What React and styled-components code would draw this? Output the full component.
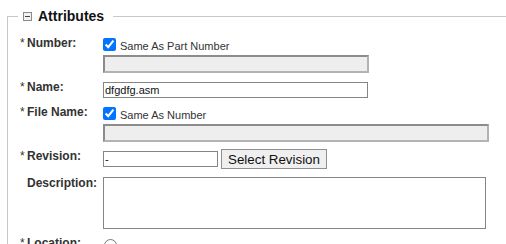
import React from "react";
import styled, { createGlobalStyle } from "styled-components";

const Global = createGlobalStyle`
  html, body { margin: 0; padding: 0; background: #fff; overflow: hidden; }
  body { font-family: "Liberation Sans", Arial, sans-serif; color: #333; }
`;

const Fieldset = styled.fieldset`
  margin: 8px 0 0 7px;
  padding: 12px 0 20px 0;
  width: 580px;
  min-width: 0;
  border: 1px solid #c8c8c8;
`;

const Legend = styled.legend`
  margin-left: 10px;
  padding: 0 9px 0 5px;
  display: flex;
  align-items: center;
  gap: 6px;
  font-size: 14px;
  font-weight: bold;
  line-height: 16px;
  color: #111;
`;

const Collapse = styled.span`
  position: relative;
  display: inline-block;
  box-sizing: border-box;
  width: 9px;
  height: 9px;
  border: 1px solid #8a8a8a;
  background: #f2f2f2;
  margin-top: 1px;
  &::after {
    content: "";
    position: absolute;
    left: 1px;
    right: 1px;
    top: 3px;
    height: 1px;
    background: #444;
  }
`;

const Form = styled.div`
  display: flex;
  flex-direction: column;
  gap: 7px;
`;

const Row = styled.div`
  display: grid;
  grid-template-columns: 95px 1fr;
  align-items: start;
`;

const Label = styled.div`
  padding-left: 12px;
  font-size: 12px;
  font-weight: bold;
  line-height: 14px;
  color: #333;
  white-space: nowrap;
`;

const Req = styled.span`
  display: inline-block;
  width: 7px;
  font-weight: normal;
`;

const Field = styled.div`
  display: flex;
  flex-direction: ${(p) => (p.$inline ? "row" : "column")};
  align-items: flex-start;
  gap: ${(p) => (p.$inline ? "3px" : "0")};
`;

const CheckLine = styled.label`
  display: flex;
  align-items: flex-start;
  margin-top: 2px;
`;

const Check = styled.input`
  margin: 0;
  width: 13px;
  height: 13px;
  accent-color: #0075ff;
`;

const CheckText = styled.span`
  margin: 2px 0 0 4px;
  font-size: 11px;
  line-height: 13px;
  color: #333;
`;

const DisabledBox = styled.input`
  box-sizing: border-box;
  margin-top: 2px;
  width: ${(p) => p.$w}px;
  height: ${(p) => p.$h}px;
  background: #eeeeee;
  border-style: solid;
  border-width: 2px;
  border-color: #8c8c8c #b3b3b3 #b3b3b3 #8c8c8c;
  padding: 0;
`;

const TextBox = styled.input`
  box-sizing: border-box;
  margin-top: 2px;
  width: ${(p) => p.$w}px;
  height: 16px;
  border: 1px solid #858585;
  padding: 0 1px;
  font-family: "Liberation Sans", Arial, sans-serif;
  font-size: 11px;
  color: #111;
  outline: none;
`;

const Button = styled.button`
  box-sizing: border-box;
  height: 20px;
  width: 106px;
  padding: 0;
  background: #efefef;
  border: 1px solid #8f8f8f;
  border-radius: 0;
  font-family: "Liberation Sans", Arial, sans-serif;
  font-size: 13.333px;
  color: #111;
`;

const TextArea = styled.textarea`
  box-sizing: border-box;
  margin: 1px 0 0 0;
  width: 383px;
  height: 52px;
  border: 1px solid #858585;
  resize: none;
  padding: 0;
  outline: none;
`;

const Radio = styled.input`
  margin: 3px 0 0 1px;
  width: 13px;
  height: 13px;
`;

export default function App() {
  return (
    <>
      <Global />
      <Fieldset>
        <Legend>
          <Collapse />
          Attributes
        </Legend>
        <Form>
          <Row>
            <Label><Req>*</Req>Number:</Label>
            <Field>
              <CheckLine>
                <Check type="checkbox" defaultChecked />
                <CheckText>Same As Part Number</CheckText>
              </CheckLine>
              <DisabledBox disabled $w={266} $h={18} />
            </Field>
          </Row>
          <Row>
            <Label><Req>*</Req>Name:</Label>
            <Field>
              <TextBox defaultValue="dfgdfg.asm" $w={265} />
            </Field>
          </Row>
          <Row>
            <Label><Req>*</Req>File Name:</Label>
            <Field>
              <CheckLine>
                <Check type="checkbox" defaultChecked />
                <CheckText>Same As Number</CheckText>
              </CheckLine>
              <DisabledBox disabled $w={386} $h={18} />
            </Field>
          </Row>
          <Row>
            <Label><Req>*</Req>Revision:</Label>
            <Field $inline>
              <TextBox defaultValue="-" $w={115} />
              <Button type="button">Select Revision</Button>
            </Field>
          </Row>
          <Row>
            <Label><Req></Req>Description:</Label>
            <Field>
              <TextArea />
            </Field>
          </Row>
          <Row>
            <Label><Req>*</Req>Location:</Label>
            <Field>
              <Radio type="radio" name="loc" />
            </Field>
          </Row>
        </Form>
      </Fieldset>
    </>
  );
}
